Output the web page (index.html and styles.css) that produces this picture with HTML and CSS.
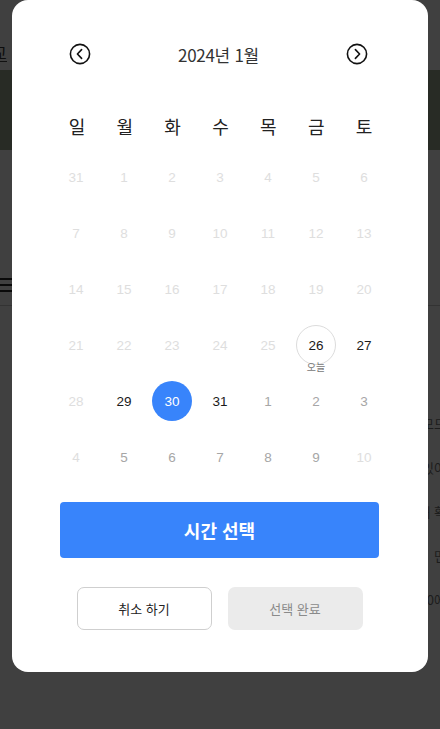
FILE: index.html
```html
<!DOCTYPE html>
<html lang="ko">
<head>
<meta charset="utf-8">
<title>날짜 선택</title>
<link rel="stylesheet" href="styles.css">
</head>
<body>
<div class="page">
  <header class="page-top">
    <span class="page-logo">교</span>
  </header>
  <div class="page-band"></div>
  <div class="page-gap"></div>
  <div class="page-menu">
    <span class="burger"><i></i><i></i><i></i></span>
  </div>
  <div class="page-list">
    <p>모드</p>
    <p>있어</p>
    <p>해 확</p>
    <p>면</p>
    <p>0에</p>
  </div>
</div>

<div class="overlay">
  <div class="modal">
    <div class="cal-head">
      <button class="nav-btn" aria-label="이전 달">
        <svg width="22" height="22" viewBox="0 0 22 22"><circle cx="11" cy="11" r="9.6" fill="none" stroke="#111" stroke-width="1.6"/><path d="M12.6 6.6 L8.4 11 L12.6 15.4" fill="none" stroke="#111" stroke-width="1.6" stroke-linecap="round" stroke-linejoin="round"/></svg>
      </button>
      <span class="cal-title">2024년 1월</span>
      <button class="nav-btn" aria-label="다음 달">
        <svg width="22" height="22" viewBox="0 0 22 22"><circle cx="11" cy="11" r="9.6" fill="none" stroke="#111" stroke-width="1.6"/><path d="M9.4 6.6 L13.6 11 L9.4 15.4" fill="none" stroke="#111" stroke-width="1.6" stroke-linecap="round" stroke-linejoin="round"/></svg>
      </button>
    </div>

    <div class="weekdays">
      <span>일</span><span>월</span><span>화</span><span>수</span><span>목</span><span>금</span><span>토</span>
    </div>

    <div class="days">
      <span class="d off">31</span><span class="d off">1</span><span class="d off">2</span><span class="d off">3</span><span class="d off">4</span><span class="d off">5</span><span class="d off">6</span>
      <span class="d off">7</span><span class="d off">8</span><span class="d off">9</span><span class="d off">10</span><span class="d off">11</span><span class="d off">12</span><span class="d off">13</span>
      <span class="d off">14</span><span class="d off">15</span><span class="d off">16</span><span class="d off">17</span><span class="d off">18</span><span class="d off">19</span><span class="d off">20</span>
      <span class="d off">21</span><span class="d off">22</span><span class="d off">23</span><span class="d off">24</span><span class="d off">25</span><span class="d today"><b>26</b><em>오늘</em></span><span class="d">27</span>
      <span class="d off">28</span><span class="d">29</span><span class="d sel"><b>30</b></span><span class="d">31</span><span class="d next">1</span><span class="d next">2</span><span class="d next">3</span>
      <span class="d off">4</span><span class="d next">5</span><span class="d next">6</span><span class="d next">7</span><span class="d next">8</span><span class="d next">9</span><span class="d off">10</span>
    </div>

    <button class="time-btn">시간 선택</button>

    <div class="actions">
      <button class="btn-cancel">취소 하기</button>
      <button class="btn-done">선택 완료</button>
    </div>
  </div>
</div>
</body>
</html>
```

FILE: styles.css
```css
* { box-sizing: border-box; }

html, body {
  margin: 0;
  padding: 0;
  width: 440px;
  height: 729px;
  overflow: hidden;
  background: #404040;
  font-family: "Noto Sans CJK KR", "Noto Sans", sans-serif;
}

/* dimmed page behind the modal */
.page {
  height: 729px;
  background: #404040;
}
.page-top {
  height: 70px;
  padding: 40px 0 0 0;
}
.page-logo {
  display: inline-block;
  margin-left: -8px;
  font-size: 16px;
  line-height: 18px;
  color: #0d0d0d;
  border-bottom: 1px solid #111;
}
.page-band {
  height: 80px;
  background: #282b25;
}
.page-gap {
  height: 126px;
}
.page-menu {
  height: 30px;
  border-bottom: 1px solid #333;
  padding-top: 2px;
}
.burger {
  display: flex;
  flex-direction: column;
  gap: 4px;
  width: 12px;
}
.burger i {
  display: block;
  height: 2px;
  background: #0a0a0a;
}
.page-list {
  padding: 108px 0 0 0;
  text-align: right;
}
.page-list p {
  margin: 0 -6px 0 0;
  height: 44px;
  font-size: 13px;
  color: #1c1c1c;
}

/* modal overlay */
.overlay {
  position: fixed;
  inset: 0;
  display: flex;
  justify-content: center;
  align-items: flex-start;
}
.modal {
  width: 416px;
  height: 672px;
  background: #fff;
  border-radius: 16px;
  padding: 42px 40px 0 40px;
  display: flex;
  flex-direction: column;
}

button {
  font-family: inherit;
  border: 0;
  background: none;
  padding: 0;
  cursor: pointer;
}

.cal-head {
  display: flex;
  align-items: center;
  justify-content: space-between;
  height: 24px;
  padding: 0 20px 0 17px;
}
.nav-btn {
  width: 22px;
  height: 22px;
  display: flex;
}
.cal-title {
  font-size: 17px;
  color: #333;
  letter-spacing: -0.3px;
}

.weekdays {
  margin-top: 45px;
  display: grid;
  grid-template-columns: repeat(7, 1fr);
  height: 30px;
  align-items: center;
  padding-left: 1px;
}
.weekdays span {
  text-align: center;
  font-size: 18px;
  color: #222;
}

.days {
  margin-top: 8px;
  display: grid;
  grid-template-columns: repeat(7, 1fr);
  grid-auto-rows: 56px;
}
.d {
  position: relative;
  display: flex;
  align-items: center;
  justify-content: center;
  font-family: "Liberation Sans", Arial, sans-serif;
  font-size: 13.5px;
  color: #1a1a1a;
}
.d.off { color: #dedede; }
.d.next { color: #a6a6a6; }
.d b {
  font-weight: normal;
  width: 40px;
  height: 40px;
  border-radius: 50%;
  display: flex;
  align-items: center;
  justify-content: center;
}
.d.today b {
  border: 1px solid #dcdcdc;
}
.d.today em {
  position: absolute;
  left: 0;
  right: 0;
  top: 42px;
  text-align: center;
  font-style: normal;
  font-size: 10px;
  font-family: "Noto Sans CJK KR", sans-serif;
  color: #777;
}
.d.sel b {
  background: #3884fb;
  color: #fff;
}

.time-btn {
  margin: 17px 9px 0 8px;
  height: 56px;
  border-radius: 4px;
  background: #3884fb;
  color: #fff;
  font-size: 18px;
  font-weight: 700;
}

.actions {
  margin-top: 29px;
  display: flex;
  justify-content: center;
  gap: 16px;
  padding-right: 1px;
}
.actions button {
  width: 135px;
  height: 43px;
  border-radius: 7px;
  font-size: 13px;
}
.btn-cancel {
  border: 1px solid #cfcfcf;
  background: #fff;
  color: #222;
}
.btn-done {
  background: #ebebeb;
  color: #8a8a8a;
}
```
